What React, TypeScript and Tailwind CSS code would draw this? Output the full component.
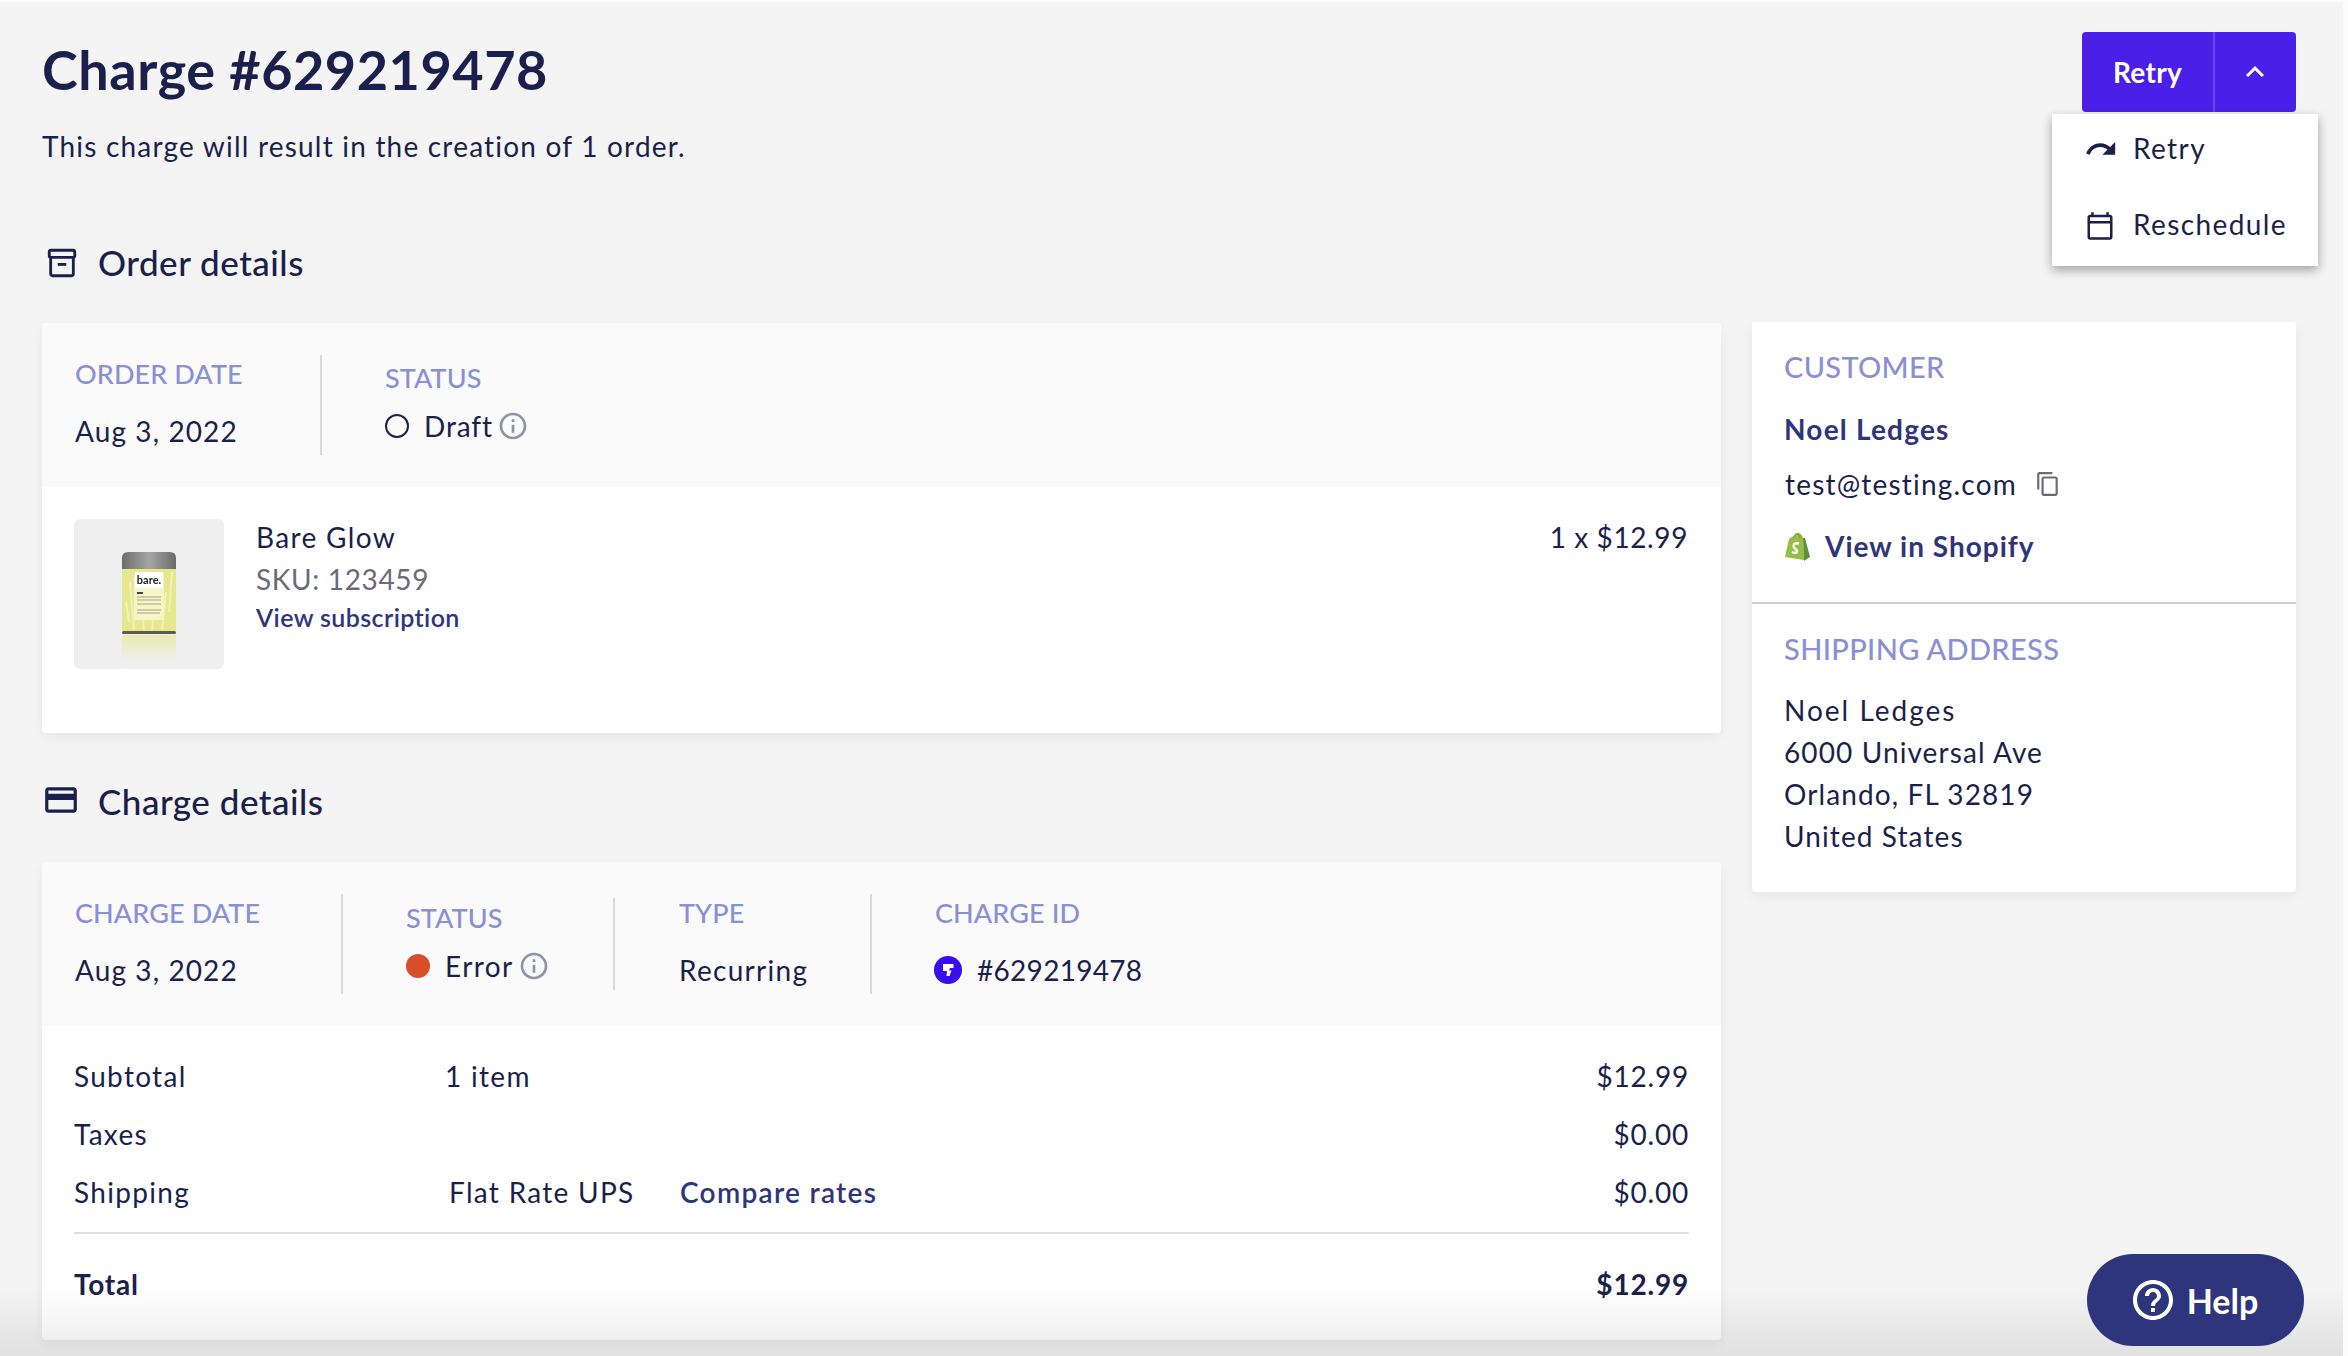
import type { ReactNode } from 'react';
import {
  MdOutlineInventory2,
  MdOutlineCreditCard,
  MdRedo,
  MdOutlineCalendarToday,
  MdOutlineContentCopy,
  MdInfoOutline,
  MdKeyboardArrowUp,
  MdHelpOutline,
} from 'react-icons/md';

const Label = ({ children }: { children: ReactNode }) => (
  <div className="h-[36px] pt-[1px] text-[27px] leading-[35px] font-medium text-[#8a90d6] tracking-[0.1px]">{children}</div>
);

const Value = ({ children, className = '' }: { children: ReactNode; className?: string }) => (
  <div className={`flex h-[36px] items-center text-[28px] leading-[34px] ${className}`}>{children}</div>
);

const InfoIcon = () => <MdInfoOutline className="ml-[4px] text-[#8f92a8]" size={32} />;

const Can = () => (
  <svg width="54" height="110" viewBox="0 0 54 110" className="blur-[0.3px]">
    <defs>
      <linearGradient id="lid" x1="0" x2="1" y1="0" y2="0">
        <stop offset="0" stopColor="#6d6d6d" />
        <stop offset="0.5" stopColor="#a5a5a5" />
        <stop offset="1" stopColor="#6a6a6a" />
      </linearGradient>
      <linearGradient id="refl" x1="0" x2="0" y1="0" y2="1">
        <stop offset="0" stopColor="#e8ebb0" />
        <stop offset="1" stopColor="#efefef" />
      </linearGradient>
    </defs>
    <rect x="0" y="83" width="54" height="27" fill="url(#refl)" />
    <rect x="0" y="14" width="54" height="67" fill="#e6e88f" />
    <path d="M8 30 L12 78 M20 50 L22 80 M32 50 L30 80 M44 40 L40 78 M50 20 L47 60 M4 50 L7 70" stroke="#f0f2b8" strokeWidth="2" />
    <path d="M0 6 Q0 0 6 0 H48 Q54 0 54 6 V17 H0 Z" fill="url(#lid)" />
    <rect x="0" y="79" width="54" height="3" rx="1.5" fill="#5c5c50" />
    <rect x="12" y="23" width="30" height="45" fill="#f5f5c8" />
    <rect x="13" y="20" width="28" height="16" fill="#ffffff" />
    <text x="27" y="32" textAnchor="middle" fontSize="11" fontWeight="700" fontFamily="Lato, sans-serif" fill="#222222">bare.</text>
    <rect x="15" y="40" width="6" height="2" fill="#444444" />
    <path d="M15 45 H39 M15 48 H39 M15 52 H39 M15 58 H39 M15 61 H38" stroke="#8f8f70" strokeWidth="0.8" />
  </svg>
);

const RechargeLogo = () => (
  <svg width="28" height="28" viewBox="0 0 28 28" className="mr-[15px] -ml-[1px]">
    <circle cx="14" cy="14" r="14" fill="#3a0cf0" />
    <path d="M9 8 H19.5 V12 H16 L15 14.5 H17.5 L15.5 20 H12.5 L13 15 H9 Z" fill="#ffffff" />
  </svg>
);

const ShopifyBag = () => (
  <svg width="26" height="29" viewBox="0 0 26 29" className="mr-[15px]">
    <path d="M1 25 L5 7 Q7 5 10 4 Q12 0 15 1 Q18 2 19 6 L20 28 Z" fill="#95bf47" />
    <path d="M19 6 L21 6 L26 25 L20 29 Z" fill="#5e8e3e" />
    <path d="M9 6 Q11 1 14 2 Q16 3 16 6" fill="none" stroke="#5e8e3e" strokeWidth="0.8" />
    <path d="M15 11.5 Q10 10.5 9.5 14 Q9.5 16 12 17.5 Q14 19 12.5 20.5 Q11 21.5 8 20" fill="none" stroke="#ffffff" strokeWidth="2.4" />
  </svg>
);

const Row = ({ label, middle, value, bold = false }: { label: string; middle?: ReactNode; value: string; bold?: boolean }) => (
  <div className={`flex h-[58px] items-center pt-[2px] text-[28px] ${bold ? 'font-bold tracking-[0.8px]' : 'tracking-[1.3px]'}`}>
    <div className="w-[371px] shrink-0">{label}</div>
    <div className="flex flex-1 items-center">{middle}</div>
    <div className="tracking-[0.8px]">{value}</div>
  </div>
);

export default function App() {
  return (
    <div
      className="relative h-[1356px] w-full overflow-hidden border-t-2 border-r-[5px] border-[#fbfbfb] bg-[#f4f4f4] pt-[30px] pl-[42px] pr-[47px] text-[#1b1f4b]"
      style={{ fontFamily: 'Lato, "Noto Sans", sans-serif' }}
    >
      {/* Header */}
      <div className="flex h-[133px] items-start justify-between">
        <div className="pt-[8px]">
          <h1 className="h-[60px] text-[54px] leading-[60px] font-bold tracking-[0.55px]">Charge #629219478</h1>
          <p className="mt-[26px] h-[40px] text-[28px] leading-[40px] tracking-[1.2px]">This charge will result in the creation of 1 order.</p>
        </div>
        <div className="relative flex h-[80px] w-[214px] rounded-[4px] bg-[#4a1fe8] text-white">
          <div className="flex w-[133px] items-center justify-center border-r-2 border-[#6a48ee] text-[28px] font-bold tracking-[0.3px]">Retry</div>
          <div className="flex flex-1 items-center justify-center pr-[2px]">
            <MdKeyboardArrowUp size={36} />
          </div>
          <div className="absolute top-[82px] left-[-30px] z-10 h-[152px] w-[266px] bg-white text-[28px] tracking-[1.4px] text-[#1b1f4b] shadow-[0_4px_10px_rgba(0,0,0,0.35)]">
            <div className="flex h-[76px] items-start pt-[16px] pl-[32px]">
              <MdRedo size={34} className="mt-[2px] mr-[15px] shrink-0" />
              <span className="leading-[36px]">Retry</span>
            </div>
            <div className="flex h-[76px] items-start pt-[16px] pl-[33px]">
              <MdOutlineCalendarToday size={30} className="mt-[5px] mr-[18px] shrink-0" />
              <span className="leading-[36px]">Reschedule</span>
            </div>
          </div>
        </div>
      </div>

      {/* Order details heading */}
      <div className="mt-[72px] mb-[38px] flex h-[48px] items-center pl-[3px]">
        <MdOutlineInventory2 size={34} className="mt-[4px] mr-[19px] shrink-0" />
        <h2 className="pt-[3px] text-[35px] font-medium tracking-[0.5px]">Order details</h2>
      </div>

      <div className="flex gap-[31px]">
        <div className="w-[1679px] shrink-0">
          {/* Order card */}
          <section className="h-[410px] rounded-[4px] bg-white shadow-[0_4px_12px_rgba(0,0,0,0.06)]">
            <div className="flex h-[164px] rounded-t-[4px] bg-[#fafafa] pl-[33px]">
              <div className="my-[32px] w-[247px] border-r-2 border-[#d9d9d9]">
                <Label>ORDER DATE</Label>
                <Value className="mt-[22px] tracking-[1.1px]">Aug 3, 2022</Value>
              </div>
              <div className="my-[32px] pt-[4px] pl-[63px]">
                <Label>STATUS</Label>
                <Value className="mt-[13px] tracking-[0.9px]">
                  <span className="mr-[15px] h-[24px] w-[24px] rounded-full border-2 border-[#1b1f4b]" />
                  Draft
                  <InfoIcon />
                </Value>
              </div>
            </div>
            <div className="flex items-start pt-[32px] pr-[33px] pl-[32px]">
              <div className="flex h-[150px] w-[150px] shrink-0 justify-center rounded-[6px] bg-[#efefef] pt-[33px]">
                <Can />
              </div>
              <div className="-mt-[3px] ml-[32px] flex-1">
                <div className="h-[42px] text-[28px] leading-[42px] tracking-[1.35px]">Bare Glow</div>
                <div className="h-[42px] text-[28px] leading-[42px] tracking-[0.65px] text-[#6a6b7a]">SKU: 123459</div>
                <a className="block h-[36px] text-[25px] leading-[34px] font-semibold tracking-[0.4px] text-[#2f357c]">View subscription</a>
              </div>
              <div className="-mt-[3px] text-[28px] leading-[42px] tracking-[0.6px]">1 x $12.99</div>
            </div>
          </section>

          {/* Charge details heading */}
          <div className="mt-[43px] mb-[38px] flex h-[48px] items-center">
            <MdOutlineCreditCard size={38} className="mr-[18px] shrink-0" />
            <h2 className="pt-[3px] text-[35px] font-medium tracking-[0.5px]">Charge details</h2>
          </div>

          {/* Charge card */}
          <section className="h-[478px] rounded-[4px] bg-white shadow-[0_4px_12px_rgba(0,0,0,0.06)]">
            <div className="flex h-[164px] items-start rounded-t-[4px] bg-[#fafafa] pl-[33px]">
              <div className="mt-[32px] h-[100px] w-[268px] border-r-2 border-[#d9d9d9]">
                <Label>CHARGE DATE</Label>
                <Value className="mt-[22px] tracking-[1.1px]">Aug 3, 2022</Value>
              </div>
              <div className="mt-[36px] h-[92px] w-[272px] border-r-2 border-[#d9d9d9] pt-[1px] pl-[63px]">
                <Label>STATUS</Label>
                <Value className="mt-[13px] tracking-[1.4px]">
                  <span className="mr-[15px] h-[24px] w-[24px] rounded-full bg-[#d94d29]" />
                  Error
                  <InfoIcon />
                </Value>
              </div>
              <div className="mt-[32px] h-[100px] w-[257px] border-r-2 border-[#d9d9d9] pl-[64px]">
                <Label>TYPE</Label>
                <Value className="mt-[22px] tracking-[1.3px]">Recurring</Value>
              </div>
              <div className="mt-[32px] h-[100px] pl-[63px]">
                <Label>CHARGE ID</Label>
                <Value className="mt-[22px] tracking-[0.3px]">
                  <RechargeLogo />
                  #629219478
                </Value>
              </div>
            </div>
            <div className="px-[32px] pt-[20px]">
              <Row label="Subtotal" value="$12.99" middle={<span>1 item</span>} />
              <Row label="Taxes" value="$0.00" />
              <Row
                label="Shipping"
                value="$0.00"
                middle={
                  <>
                    <span className="ml-[4px] w-[231px]">Flat Rate UPS</span>
                    <a className="font-semibold text-[#2f357c]">Compare rates</a>
                  </>
                }
              />
              <div className="mt-[12px] mb-[20px] h-[2px] bg-[#dedede]" />
              <Row label="Total" value="$12.99" bold />
            </div>
          </section>
        </div>

        {/* Customer panel */}
        <aside className="-mt-px h-[570px] w-[544px] shrink-0 rounded-[4px] bg-white pl-[32px] shadow-[0_4px_12px_rgba(0,0,0,0.06)]">
          <div className="pt-[27px]">
            <div className="h-[36px] text-[29px] leading-[36px] font-medium tracking-[0.3px] text-[#8a90d6]">CUSTOMER</div>
            <div className="mt-[24px] h-[40px] text-[28px] leading-[40px] font-bold tracking-[1.2px] text-[#2f357c]">Noel Ledges</div>
            <div className="mt-[14px] flex h-[40px] items-center pt-[2px] text-[28px] tracking-[1.2px]">
              <span className="ml-[1px]">test@testing.com</span>
              <MdOutlineContentCopy size={26} className="ml-[18px] text-[#6a6b7a]" />
            </div>
            <div className="mt-[23px] flex h-[40px] items-center text-[28px] font-bold tracking-[1px] text-[#2f357c]">
              <ShopifyBag />
              View in Shopify
            </div>
          </div>
          <div className="mt-[36px] -ml-[32px] h-[2px] bg-[#cfcfcf]" />
          <div className="pt-[27px]">
            <div className="h-[36px] text-[29px] leading-[36px] font-medium tracking-[0.35px] text-[#8a90d6]">SHIPPING ADDRESS</div>
            <div className="mt-[22px] text-[28px] leading-[42px] tracking-[1.1px]">
              <div className="tracking-[2px]">Noel Ledges</div>
              <div>6000 Universal Ave</div>
              <div>Orlando, FL 32819</div>
              <div>United States</div>
            </div>
          </div>
        </aside>
      </div>

      {/* Bottom fade */}
      <div className="pointer-events-none absolute inset-x-0 bottom-0 h-[70px] bg-gradient-to-b from-transparent to-[rgba(0,0,0,0.08)]" />

      {/* Help button */}
      <button className="absolute top-[1252px] left-[2087px] flex h-[92px] w-[217px] items-center justify-center rounded-full bg-[#2f357c] pr-[4px] text-[34px] font-bold text-white">
        <MdHelpOutline size={48} className="mr-[10px]" />
        Help
      </button>
    </div>
  );
}
